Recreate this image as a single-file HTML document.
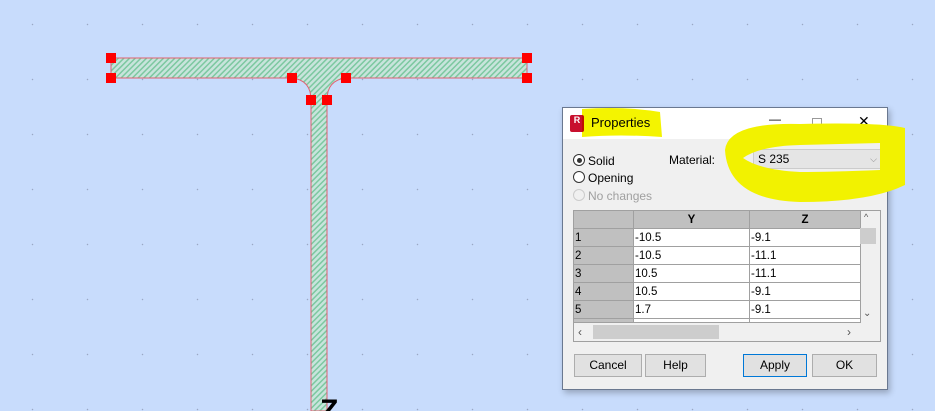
<!DOCTYPE html><html><head><style>
body{margin:0;width:935px;height:411px;overflow:hidden;background:#c8dcfc;position:relative;font-family:"Liberation Sans",sans-serif;font-size:12px;}
.bg{position:absolute;inset:0;background-image:radial-gradient(circle,#9aa8c4 0.6px,transparent 0.9px);background-size:55px 55px;background-position:5px -3px;}
.dlg{position:absolute;left:562px;top:107px;width:324px;height:281px;background:#f0f0f0;border:1px solid #6a7890;box-shadow:2px 3px 6px rgba(0,0,0,.25);}
.tb{position:absolute;left:0;top:0;right:0;height:31px;background:#fff;}
.a{position:absolute;white-space:nowrap;}
.btn{position:absolute;top:246px;height:21px;border:1px solid #adadad;background:#e1e1e1;text-align:center;line-height:21px;}
table{border-collapse:collapse;position:absolute;left:11px;top:103px;font-size:11.5px;}
td{height:17px;border-bottom:1px solid #a0a0a0;border-right:1px solid #a0a0a0;background:#fff;padding:0 1px;}
td.h{background:#c0c0c0;}
</style></head><body><div class="bg"></div>
<svg width="935" height="411" style="position:absolute;left:0;top:0">
<defs><pattern id="hp" width="4" height="4" patternUnits="userSpaceOnUse" patternTransform="rotate(45)"><rect width="4" height="4" fill="#c8e4dc"/><rect width="1.5" height="4" fill="#7cc8a0"/></pattern></defs>
<path d="M111 58H527V78H346Q327 80 327 100V411H311V100Q311 80 292 78H111Z" fill="url(#hp)" stroke="#e06070" stroke-width="1"/>
<g fill="#f00"><rect x="106" y="53" width="10" height="10"/><rect x="106" y="73" width="10" height="10"/><rect x="522" y="53" width="10" height="10"/><rect x="522" y="73" width="10" height="10"/><rect x="287" y="73" width="10" height="10"/><rect x="341" y="73" width="10" height="10"/><rect x="306" y="95" width="10" height="10"/><rect x="322" y="95" width="10" height="10"/></g>
<text x="320" y="420" font-family="Liberation Sans" font-weight="bold" font-size="30">Z</text>
</svg>
<div class="dlg">
<div class="tb"></div>
<div class="a" style="left:7px;top:7px;width:14px;height:17px;background:#c8102e;border-radius:2px;color:#fff;font-size:9px;font-weight:bold;text-align:center">R</div>
<div class="a" style="left:28px;top:7px;font-size:13px">Properties</div>
<div class="a" style="left:206px;top:4px;font-size:12px">—</div>
<div class="a" style="left:249px;top:10px;width:8px;height:8px;border:1px solid #999"></div>
<div class="a" style="left:295px;top:5px;font-size:14px">✕</div>
<div class="a" style="left:10px;top:46px;width:10px;height:10px;border:1px solid #333;border-radius:50%;background:#fff"><div style="margin:2.5px;width:5px;height:5px;border-radius:50%;background:#333"></div></div>
<div class="a" style="left:25px;top:46px">Solid</div>
<div class="a" style="left:10px;top:63px;width:10px;height:10px;border:1px solid #333;border-radius:50%;background:#fff"></div>
<div class="a" style="left:25px;top:63px">Opening</div>
<div class="a" style="left:10px;top:81px;width:10px;height:10px;border:1px solid #ccc;border-radius:50%"></div>
<div class="a" style="left:25px;top:81px;color:#a0a0a0">No changes</div>
<div class="a" style="left:106px;top:45px">Material:</div>
<div class="a" style="left:190px;top:41px;width:124px;height:18px;border:1px solid #ccc;background:#e5e5e5;line-height:18px;padding-left:4px">S 235<span style="position:absolute;right:5px;color:#888;font-size:9px">⌵</span></div>
<div class="a" style="left:10px;top:102px;width:306px;height:130px;border:1px solid #a0a0a0;background:#f0f0f0"></div>
<table>
<tr><td class="h" style="width:57px"></td><td class="h" style="width:113px;text-align:center;font-weight:bold">Y</td><td class="h" style="width:108px;text-align:center;font-weight:bold">Z</td></tr>
<tr><td class="h">1</td><td>-10.5</td><td>-9.1</td></tr>
<tr><td class="h">2</td><td>-10.5</td><td>-11.1</td></tr>
<tr><td class="h">3</td><td>10.5</td><td>-11.1</td></tr>
<tr><td class="h">4</td><td>10.5</td><td>-9.1</td></tr>
<tr><td class="h">5</td><td>1.7</td><td>-9.1</td></tr>
<tr><td class="h" style="height:3px"></td><td style="height:3px"></td><td style="height:3px"></td></tr>
</table>
<div class="a" style="left:297px;top:120px;width:16px;height:16px;background:#cdcdcd"></div>
<div class="a" style="left:301px;top:104px;font-size:9px;color:#555">^</div>
<div class="a" style="left:300px;top:200px;font-size:10px;color:#555">⌄</div>
<div class="a" style="left:11px;top:216px;width:286px;height:16px;background:#f0f0f0"></div>
<div class="a" style="left:30px;top:217px;width:126px;height:14px;background:#cdcdcd"></div>
<div class="a" style="left:15px;top:217px;color:#555">‹</div>
<div class="a" style="left:284px;top:217px;color:#555">›</div>
<div class="btn" style="left:11px;width:66px">Cancel</div>
<div class="btn" style="left:82px;width:59px">Help</div>
<div class="btn" style="left:180px;width:62px;border-color:#0078d7">Apply</div>
<div class="btn" style="left:249px;width:63px">OK</div>
</div>
<svg width="935" height="411" style="position:absolute;left:0;top:0;pointer-events:none;mix-blend-mode:multiply">
<path d="M582 109Q625 106 660 112L662 137Q620 134 582 137Z" fill="#f4f400"/>
</svg>
<svg width="935" height="411" style="position:absolute;left:0;top:0;pointer-events:none">
<path d="M725 150Q728 122 800 124Q880 122 905 128L905 185Q870 202 800 202Q728 200 725 150Z M743 158Q760 146 800 145L880 143L880 170Q830 172 800 172Q760 170 743 158Z" fill="#f2f200" fill-rule="evenodd"/>
</svg>
</body></html>
